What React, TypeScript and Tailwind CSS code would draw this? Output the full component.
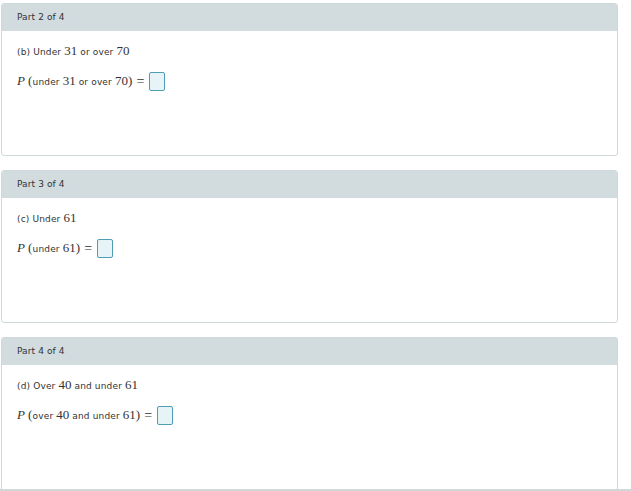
const parts = [
  {
    label: "Part 2 of 4",
    prefix: "(b)",
    title: [
      { t: "Under ", n: false },
      { t: "31", n: true },
      { t: " or over ", n: false },
      { t: "70", n: true },
    ],
    expr: [
      { t: "under ", n: false },
      { t: "31", n: true },
      { t: " or over ", n: false },
      { t: "70", n: true },
    ],
  },
  {
    label: "Part 3 of 4",
    prefix: "(c)",
    title: [
      { t: "Under ", n: false },
      { t: "61", n: true },
    ],
    expr: [
      { t: "under ", n: false },
      { t: "61", n: true },
    ],
  },
  {
    label: "Part 4 of 4",
    prefix: "(d)",
    title: [
      { t: "Over ", n: false },
      { t: "40", n: true },
      { t: " and under ", n: false },
      { t: "61", n: true },
    ],
    expr: [
      { t: "over ", n: false },
      { t: "40", n: true },
      { t: " and under ", n: false },
      { t: "61", n: true },
    ],
  },
]

type Seg = { t: string; n: boolean }

function Mixed({ segs }: { segs: Seg[] }) {
  return (
    <>
      {segs.map((s, i) =>
        s.n ? (
          <span key={i} className="font-['Liberation_Serif',serif] text-[13px] tracking-normal">
            {s.t}
          </span>
        ) : (
          <span key={i} className="whitespace-pre">
            {s.t}
          </span>
        ),
      )}
    </>
  )
}

function PartCard({ part, last }: { part: (typeof parts)[number]; last?: boolean }) {
  return (
    <div
      className={
        "ml-[1px] w-[617px] border border-[#cfd9dc] bg-white rounded-[3px] " +
        (last ? "h-[152px] rounded-b-none border-b-0" : "h-[153px]")
      }
    >
      <div className="h-[27px] bg-[#d2dcdf] rounded-t-[2px] flex items-center pl-[15px] text-[9px] text-[#333] tracking-[0.1px]">
        {part.label}
      </div>
      <div className="pl-[15px] pt-[10px] text-[9px] text-[#333] tracking-[0.15px]">
        <div className="flex items-baseline h-[16px]">
          <span className="whitespace-pre">{part.prefix} </span>
          <Mixed segs={part.title} />
        </div>
        <div className="flex items-center mt-[14px] h-[20px]">
          <span className="font-['Liberation_Serif',serif] italic text-[13px] mr-[3px]">P</span>
          <span className="font-['Liberation_Serif',serif] text-[13px]">(</span>
          <span className="flex items-baseline">
            <Mixed segs={part.expr} />
          </span>
          <span className="font-['Liberation_Serif',serif] text-[13px]">)</span>
          <span className="font-['Liberation_Serif',serif] text-[14px] ml-[4px] mr-[5px]">=</span>
          <span className="inline-block w-[16px] h-[19px] border border-[#4d9db3] bg-[#e6f4f8] rounded-[2px]" />
        </div>
      </div>
    </div>
  )
}

export default function App() {
  return (
    <div className="w-[631px] h-[491px] bg-white overflow-hidden font-['DejaVu_Sans',sans-serif] pt-[3px]">
      <div className="flex flex-col gap-[14px]">
        {parts.map((p, i) => (
          <PartCard key={p.label} part={p} last={i === parts.length - 1} />
        ))}
      </div>
      <div className="h-[2px] w-full bg-[#cfd9dc]" />
    </div>
  )
}
